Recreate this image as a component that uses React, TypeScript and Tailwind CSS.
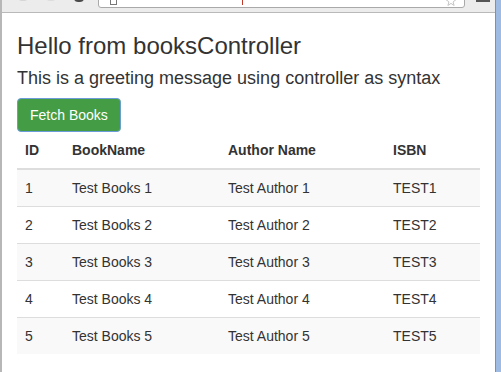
const books = [1, 2, 3, 4, 5].map((n) => ({
  id: n,
  name: `Test Books ${n}`,
  author: `Test Author ${n}`,
  isbn: `TEST${n}`,
}))

function BrowserChrome() {
  return (
    <div className="flex h-[13px] shrink-0 items-start gap-[18px] overflow-hidden border-b border-[#b9b9b9] bg-[#ececec] pl-[16px]">
      {/* nav buttons, mostly cut off above */}
      <span className="-mt-[7px] h-[8px] w-[10px] rounded-full bg-[#d6d6d6]" />
      <span className="-mt-[7px] h-[8px] w-[10px] rounded-full bg-[#dcdcdc]" />
      <span className="-mt-[6px] h-[8px] w-[10px] rounded-full bg-[#4a4a4a]" />
      <div className="-ml-[4px] -mt-[4px] flex h-[12px] w-[367px] items-center rounded-b-[3px] border border-[#a9a9a9] bg-white pl-[11px] pr-[8px]">
        <span className="h-[6px] w-[7px] border border-[#777] bg-white" />
        <span className="ml-[125px] h-[5px] w-[1px] bg-[#c0392b]" />
        <svg className="ml-auto" width="10" height="8" viewBox="0 0 10 8">
          <path d="M5 -2 L6.3 1.5 L10 1.6 L7.1 3.9 L8.1 7.5 L5 5.4 L1.9 7.5 L2.9 3.9 L0 1.6 L3.7 1.5 Z" fill="none" stroke="#c4c4c4" strokeWidth="1" />
        </svg>
      </div>
      <span className="-ml-[7px] h-[2px] w-[14px] bg-[#555]" />
    </div>
  )
}

export default function App() {
  return (
    <div
      className="flex h-[372px] w-[501px] overflow-hidden bg-[#9dbbe3]"
      style={{ fontFamily: '"Liberation Sans", Arial, sans-serif' }}
    >
      <div className="flex w-[496px] flex-col border-l-2 border-r border-l-[#b7b7b7] border-r-[#8e8e8e] bg-white">
        <BrowserChrome />
        <div className="px-[15px] text-[14px] leading-[20px] text-[#333]">
          <h3 className="mb-[10px] mt-[20px] text-[24px] leading-[26.4px]">Hello from booksController</h3>
          <h4 className="mb-[9px] mt-[10px] text-[18px] leading-[19.8px]">This is a greeting message using controller as syntax</h4>
          <button
            type="button"
            className="rounded-[4px] border border-[#6b9bd8] bg-[#449d44] px-[12px] py-[6px] text-[14px] leading-[20px] text-white"
          >
            Fetch Books
          </button>
          <table className="w-full border-collapse text-left">
            <thead>
              <tr className="border-b-2 border-[#ddd]">
                <th className="w-[47px] p-[8px] font-bold">ID</th>
                <th className="w-[156px] p-[8px] font-bold">BookName</th>
                <th className="w-[165px] p-[8px] font-bold">Author Name</th>
                <th className="p-[8px] font-bold">ISBN</th>
              </tr>
            </thead>
            <tbody>
              {books.map((b, i) => (
                <tr key={b.id} className={`border-t border-[#ddd] first:border-t-0 ${i % 2 === 0 ? 'bg-[#f9f9f9]' : 'bg-white'}`}>
                  <td className="p-[8px]">{b.id}</td>
                  <td className="p-[8px]">{b.name}</td>
                  <td className="p-[8px]">{b.author}</td>
                  <td className="p-[8px]">{b.isbn}</td>
                </tr>
              ))}
            </tbody>
          </table>
        </div>
      </div>
    </div>
  )
}
